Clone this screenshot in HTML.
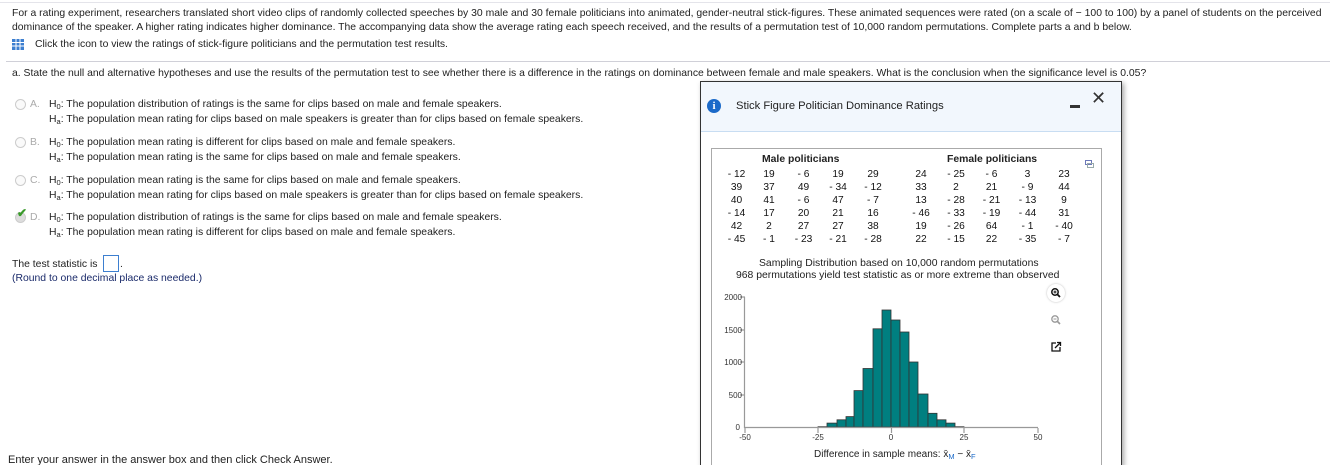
<!DOCTYPE html>
<html><head><meta charset="utf-8"><style>
html,body{margin:0;width:1330px;height:465px;overflow:hidden}
body{background:#fff;font-family:"Liberation Sans",Arial,sans-serif;font-size:10.4px;color:#222;position:relative}
.a{position:absolute;white-space:nowrap}
.hr{position:absolute;height:1px;background:#d0d0d8}
.rad{position:absolute;width:9px;height:9px;border:1px solid #ccc;border-radius:50%;background:#fafafa}
.lbl{color:#aaa}
sub{font-size:7.5px;vertical-align:-2px}
.blue{color:#1a2a6a}
table{border-collapse:collapse}
td{padding:0;height:13px;text-align:center;font-size:10.2px;color:#111}
</style></head><body>
<div class="hr" style="left:0;top:2px;width:1330px;background:#e4e4ea"></div>
<div class="a" style="left:12px;top:8px">For a rating experiment, researchers translated short video clips of randomly collected speeches by 30 male and 30 female politicians into animated, gender-neutral stick-figures. These animated sequences were rated (on a scale of &minus; 100 to 100) by a panel of students on the perceived</div>
<div class="a" style="left:12px;top:22px">dominance of the speaker. A higher rating indicates higher dominance. The accompanying data show the average rating each speech received, and the results of a permutation test of 10,000 random permutations. Complete parts a and b below.</div>
<svg class="a" style="left:12px;top:39px" width="12" height="11"><rect x="0" y="0" width="12" height="11" fill="#3d7fd0"/><g stroke="#fff" stroke-width="1"><line x1="0" y1="3.5" x2="12" y2="3.5"/><line x1="0" y1="7" x2="12" y2="7"/><line x1="4" y1="0" x2="4" y2="11"/><line x1="8" y1="0" x2="8" y2="11"/></g></svg>
<div class="a" style="left:35px;top:39px">Click the icon to view the ratings of stick-figure politicians and the permutation test results.</div>
<div class="hr" style="left:6px;top:61px;width:1324px"></div>
<div class="a" style="left:12px;top:68px">a. State the null and alternative hypotheses and use the results of the permutation test to see whether there is a difference in the ratings on dominance between female and male speakers. What is the conclusion when the significance level is 0.05?</div>

<div class="rad" style="left:15px;top:99px"></div><div class="a lbl" style="left:30px;top:99px">A.</div>
<div class="a" style="left:49px;top:99px">H<sub>0</sub>: The population distribution of ratings is the same for clips based on male and female speakers.</div>
<div class="a" style="left:49px;top:114px">H<sub>a</sub>: The population mean rating for clips based on male speakers is greater than for clips based on female speakers.</div>
<div class="rad" style="left:15px;top:137px"></div><div class="a lbl" style="left:30px;top:137px">B.</div>
<div class="a" style="left:49px;top:137px">H<sub>0</sub>: The population mean rating is different for clips based on male and female speakers.</div>
<div class="a" style="left:49px;top:152px">H<sub>a</sub>: The population mean rating is the same for clips based on male and female speakers.</div>
<div class="rad" style="left:15px;top:175px"></div><div class="a lbl" style="left:30px;top:175px">C.</div>
<div class="a" style="left:49px;top:175px">H<sub>0</sub>: The population mean rating is the same for clips based on male and female speakers.</div>
<div class="a" style="left:49px;top:190px">H<sub>a</sub>: The population mean rating for clips based on male speakers is greater than for clips based on female speakers.</div>
<div class="rad" style="left:15px;top:212px;background:#ddd"></div><div class="a" style="left:17px;top:206px;color:#3a9a2a;font-size:12px;font-weight:bold">✔</div><div class="a lbl" style="left:30px;top:212px">D.</div>
<div class="a" style="left:49px;top:212px">H<sub>0</sub>: The population distribution of ratings is the same for clips based on male and female speakers.</div>
<div class="a" style="left:49px;top:227px">H<sub>a</sub>: The population mean rating is different for clips based on male and female speakers.</div>

<div class="a" style="left:12px;top:259px">The test statistic is</div>
<div class="a" style="left:103px;top:255px;width:14px;height:15px;border:1px solid #3d7fd0"></div>
<div class="a" style="left:120px;top:259px">.</div>
<div class="a blue" style="left:12px;top:273px">(Round to one decimal place as needed.)</div>
<div class="a" style="left:8px;top:455px;font-size:11px;line-height:10px;height:10px">Enter your answer in the answer box and then click Check Answer.</div>

<!-- dialog -->
<div class="a" style="left:700px;top:81px;width:420px;height:384px;border:1px solid #333;border-bottom:none;background:#fff;box-shadow:2px 2px 5px rgba(0,0,0,.35);overflow:hidden">
 <div style="position:absolute;left:0;top:0;width:420px;height:49px;background:#f2f7fd;border-bottom:1px solid #c8ddf2"></div>
 <div style="position:absolute;left:6px;top:17px;width:14px;height:14px;border-radius:50%;background:#1b6ac9;color:#fff;font-weight:bold;font-size:11px;text-align:center;line-height:14px;font-family:'Liberation Serif',serif">i</div>
 <div class="a" style="left:35px;top:18px;font-size:11.2px;color:#222">Stick Figure Politician Dominance Ratings</div>
 <div class="a" style="left:369px;top:23px;width:10px;height:3px;background:#333"></div>
 <div class="a" style="left:390px;top:6px;font-size:18px;color:#333">✕</div>
 <div style="position:absolute;left:10px;top:66px;width:389px;height:318px;border:1px solid #aaa;border-bottom:none"></div>
 <div class="a" style="left:384px;top:78px;width:5px;height:3px;border:1px solid #6c78b8"></div>
 <div class="a" style="left:386px;top:81px;width:5px;height:3px;border:1px solid #9aa"></div>
 <div class="a" style="left:61px;top:72px;font-weight:bold;font-size:10.4px">Male politicians</div>
 <div class="a" style="left:246px;top:72px;font-weight:bold;font-size:10.4px">Female politicians</div>
 <table class="a" style="left:20px;top:86px"><tr>
 <td style="width:31px">- 12</td><td style="width:34px">19</td><td style="width:35px">- 6</td><td style="width:34px">19</td><td style="width:36px">29</td></tr>
 <tr><td>39</td><td>37</td><td>49</td><td>- 34</td><td>- 12</td></tr>
 <tr><td>40</td><td>41</td><td>- 6</td><td>47</td><td>- 7</td></tr>
 <tr><td>- 14</td><td>17</td><td>20</td><td>21</td><td>16</td></tr>
 <tr><td>42</td><td>2</td><td>27</td><td>27</td><td>38</td></tr>
 <tr><td>- 45</td><td>- 1</td><td>- 23</td><td>- 21</td><td>- 28</td></tr></table>
 <table class="a" style="left:203px;top:86px"><tr>
 <td style="width:34px">24</td><td style="width:36px">- 25</td><td style="width:35px">- 6</td><td style="width:37px">3</td><td style="width:36px">23</td></tr>
 <tr><td>33</td><td>2</td><td>21</td><td>- 9</td><td>44</td></tr>
 <tr><td>13</td><td>- 28</td><td>- 21</td><td>- 13</td><td>9</td></tr>
 <tr><td>- 46</td><td>- 33</td><td>- 19</td><td>- 44</td><td>31</td></tr>
 <tr><td>19</td><td>- 26</td><td>64</td><td>- 1</td><td>- 40</td></tr>
 <tr><td>22</td><td>- 15</td><td>22</td><td>- 35</td><td>- 7</td></tr></table>
 <div class="a" style="left:58px;top:176px">Sampling Distribution based on 10,000 random permutations</div>
 <div class="a" style="left:35px;top:188px">968 permutations yield test statistic as or more extreme than observed</div>
</div>

<svg class="a" style="left:700px;top:280px" width="400" height="185" font-family="Liberation Sans,Arial,sans-serif">
 <g fill="#007f80" stroke="#333" stroke-width="0.8">
  <rect x="118" y="146.7" width="9" height="0.3"/>
  <rect x="127" y="143.1" width="10" height="3.9"/>
  <rect x="137" y="139.8" width="9" height="7.2"/>
  <rect x="146" y="136.6" width="8" height="10.4"/>
  <rect x="154" y="110.6" width="9" height="36.4"/>
  <rect x="163" y="88.5" width="10" height="58.5"/>
  <rect x="173" y="48.8" width="9" height="98.2"/>
  <rect x="182" y="30" width="9" height="117"/>
  <rect x="191" y="40" width="9" height="107"/>
  <rect x="200" y="52" width="9" height="95"/>
  <rect x="209" y="82" width="9" height="65"/>
  <rect x="218" y="114" width="10" height="33"/>
  <rect x="228" y="133.3" width="9" height="13.7"/>
  <rect x="237" y="139.8" width="9" height="7.2"/>
  <rect x="246" y="143.1" width="9" height="3.9"/>
  <rect x="255" y="146.7" width="9" height="0.3"/>
 </g>
 <g stroke="#999" stroke-width="1.2"><line x1="44" y1="147.5" x2="338" y2="147.5"/><line x1="44.5" y1="17" x2="44.5" y2="148"/>
 <line x1="45" y1="153" x2="45" y2="148"/><line x1="118" y1="153" x2="118" y2="148"/><line x1="191.5" y1="153" x2="191.5" y2="148"/><line x1="264" y1="153" x2="264" y2="148"/><line x1="338" y1="153" x2="338" y2="148"/>
 <line x1="40" y1="17" x2="45" y2="17"/><line x1="40" y1="50" x2="45" y2="50"/><line x1="40" y1="82" x2="45" y2="82"/><line x1="40" y1="115" x2="45" y2="115"/></g>
 <g font-size="8" fill="#333" text-anchor="end"><text x="42" y="20">2000</text><text x="42" y="53">1500</text><text x="42" y="85">1000</text><text x="42" y="118">500</text><text x="40" y="150">0</text></g>
 <g font-size="8" fill="#333" text-anchor="middle"><text x="45" y="160">-50</text><text x="118" y="160">-25</text><text x="191" y="160">0</text><text x="264" y="160">25</text><text x="338" y="160">50</text></g>
 <text x="114" y="177" font-size="10" fill="#222">Difference in sample means: x̄<tspan font-size="7.5" dy="2" fill="#1b6ac9">M</tspan><tspan dy="-2"> − x̄</tspan><tspan font-size="7.5" dy="2" fill="#1b6ac9">F</tspan></text>
 <g>
  <circle cx="356" cy="13" r="9" fill="#fff" style="filter:drop-shadow(0 0 1px #bbb)"/>
  <circle cx="355" cy="12" r="3.2" fill="none" stroke="#111" stroke-width="1.5"/><line x1="357.5" y1="14.5" x2="360" y2="17" stroke="#111" stroke-width="1.8"/><path d="M353.5 12h3M355 10.5v3" stroke="#111" stroke-width="1"/>
  <circle cx="356" cy="40" r="9" fill="#fff"/>
  <circle cx="355" cy="39" r="3.2" fill="none" stroke="#999" stroke-width="1.3"/><line x1="357.5" y1="41.5" x2="360" y2="44" stroke="#999" stroke-width="1.6"/><path d="M353.5 39h3" stroke="#999"/>
  <circle cx="356" cy="67" r="9" fill="#fff"/>
  <path d="M356 63h-4v8h8v-4" fill="none" stroke="#111" stroke-width="1.3"/><path d="M355 68l5-5M357 62.5h3.5v3.5" fill="none" stroke="#111" stroke-width="1.3"/>
 </g>
</svg>
</body></html>
